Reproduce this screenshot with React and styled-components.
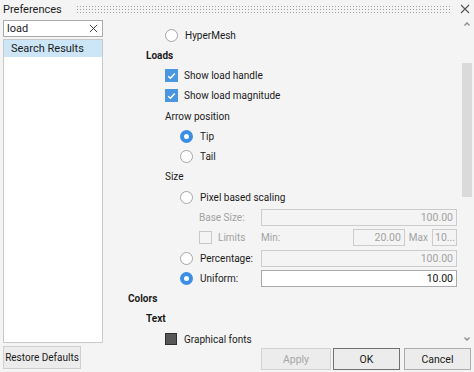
import React from 'react';
import styled, { createGlobalStyle } from 'styled-components';

const GlobalStyle = createGlobalStyle`
  html, body {
    margin: 0;
    padding: 0;
    background: #f4f4f4;
  }
  body {
    font-family: Roboto, 'Liberation Sans', sans-serif;
    font-size: 10px;
    color: #1b1b1b;
  }
`;

const INDENT = [25, 43, 62, 77, 96];
const ROW_H = 20.27;

const Window = styled.div`
  width: 474px;
  height: 372px;
  box-sizing: border-box;
  padding-left: 3px;
  display: grid;
  grid-template-columns: 100px 1fr;
  grid-template-rows: 18px 327px 1fr;
  overflow: hidden;
`;

const TitleBar = styled.div`
  grid-column: 1 / -1;
  display: flex;
  align-items: center;
`;
const Title = styled.div`
  font-size: 11px;
  color: #222;
`;
const Dots = styled.div`
  flex: 1;
  height: 9px;
  margin: 0 8px 0 14px;
  background-image: radial-gradient(#9c9c9c 40%, transparent 45%);
  background-size: 3px 3px;
`;
const CloseBtn = styled.div`
  width: 10px;
  height: 10px;
  margin-right: 4px;
  display: flex;
  svg {
    display: block;
  }
`;

const LeftCol = styled.div`
  display: flex;
  flex-direction: column;
  padding: 2px 0 2px 0;
  gap: 2px;
`;
const Search = styled.div`
  height: 17px;
  box-sizing: border-box;
  border: 1px solid #ababab;
  background: #fff;
  display: flex;
  align-items: center;
  padding: 0 4px 0 3px;
  font-size: 11px;
  span {
    flex: 1;
  }
`;
const List = styled.div`
  flex: 1;
  border: 1px solid #c9c9c9;
  background: #fff;
  padding: 0;
`;
const ListItem = styled.div`
  height: 17px;
  line-height: 17px;
  padding-left: 7px;
  background: ${p => (p.$selected ? '#cce6f7' : 'transparent')};
  font-size: 11px;
`;

const RightCol = styled.div`
  display: flex;
  min-width: 0;
`;
const Content = styled.div`
  flex: 1;
  padding-top: 7px;
`;
const Row = styled.div`
  height: ${ROW_H}px;
  display: flex;
  align-items: center;
  padding-left: ${p => INDENT[p.$level]}px;
  color: ${p => (p.$disabled ? '#a2a2a2' : 'inherit')};
`;
const Heading = styled(Row)`
  font-weight: 700;
`;
const FieldRow = styled.div`
  height: ${ROW_H}px;
  display: grid;
  grid-template-columns: 158px 196px;
  align-items: center;
`;
const FieldLabel = styled.div`
  display: flex;
  align-items: center;
  padding-left: ${p => INDENT[p.$level]}px;
  color: ${p => (p.$disabled ? '#a2a2a2' : 'inherit')};
`;
const Input = styled.div`
  height: 17px;
  box-sizing: border-box;
  width: ${p => (p.$width ? `${p.$width}px` : '100%')};
  border: 1px solid ${p => (p.$disabled ? '#cccccc' : '#a9a9a9')};
  background: ${p => (p.$disabled ? '#f4f4f4' : '#fff')};
  color: ${p => (p.$disabled ? '#a2a2a2' : '#111')};
  text-align: ${p => (p.$left ? 'left' : 'right')};
  padding: 0 3px 0 2px;
  line-height: 15px;
  font-size: 10.5px;
  overflow: hidden;
  white-space: nowrap;
`;
const MinMax = styled.div`
  display: flex;
  align-items: center;
  color: #a2a2a2;
`;
const MinLabel = styled.span`
  flex: 1;
`;
const MaxLabel = styled.span`
  margin: 0 4px;
`;

const Radio = styled.span`
  width: 13px;
  height: 13px;
  box-sizing: border-box;
  border-radius: 50%;
  border: ${p => (p.$checked ? '4px solid #3a8ee6' : '1px solid #a6a6a6')};
  background: #fff;
  margin-right: 7px;
  flex: none;
`;
const Check = styled.span`
  width: 13px;
  height: 13px;
  box-sizing: border-box;
  flex: none;
  margin-right: 6px;
  background: ${p => (p.$checked ? '#4a96e0' : 'transparent')};
  border: 1px solid ${p => (p.$checked ? '#4a96e0' : '#c8c8c8')};
  display: flex;
  align-items: center;
  justify-content: center;
`;
const Swatch = styled.span`
  width: 12px;
  height: 12px;
  box-sizing: border-box;
  flex: none;
  margin-right: 7px;
  background: ${p => p.$color};
  border: 1px solid #2e2e2e;
`;

const ScrollBar = styled.div`
  width: 10px;
  margin-right: 2px;
  display: flex;
  flex-direction: column;
`;
const ScrollArrow = styled.div`
  height: 12px;
  display: flex;
  align-items: center;
  justify-content: center;
`;
const Thumb = styled.div`
  margin-top: 33px;
  height: 134px;
  background: #dadada;
`;
const Spacer = styled.div`
  flex: 1;
`;

const FooterLeft = styled.div`
  padding-top: 1px;
`;
const FooterRight = styled.div`
  display: flex;
  padding: 3px 0 0 158px;
  gap: 2px;
`;
const Button = styled.button`
  font-family: inherit;
  font-size: 10.5px;
  white-space: nowrap;
  height: ${p => (p.$tall ? 23 : 22)}px;
  width: ${p => p.$width}px;
  padding: 0;
  margin-right: ${p => p.$gap || 0}px;
  background: #ececec;
  color: ${p => (p.$disabled ? '#a6a6a6' : '#1b1b1b')};
  border: 1px solid
    ${p => (p.$primary ? '#707070' : p.$disabled ? '#d2d2d2' : '#adadad')};
`;
const SmallButton = styled(Button)`
  font-size: 10px;
  border-color: #cfcfcf;
`;

const Chevron = ({ up }) => (
  <svg width="8" height="6" viewBox="0 0 8 6">
    <polyline
      points={up ? '1.5,4.5 4,2 6.5,4.5' : '1.5,1.5 4,4 6.5,1.5'}
      fill="none"
      stroke="#8a8a8a"
      strokeWidth="1.3"
    />
  </svg>
);

const Tick = () => (
  <svg width="9" height="8" viewBox="0 0 9 8">
    <polyline
      points="1.2,4.2 3.4,6.2 7.8,1.5"
      fill="none"
      stroke="#fff"
      strokeWidth="1.5"
    />
  </svg>
);

const Cross = ({ size, color }) => (
  <svg width={size} height={size} viewBox="0 0 10 10">
    <path d="M1 1 L9 9 M9 1 L1 9" stroke={color} strokeWidth="1.1" />
  </svg>
);

export default function App() {
  return (
    <>
      <GlobalStyle />
      <Window>
        <TitleBar>
          <Title>Preferences</Title>
          <Dots />
          <CloseBtn>
            <Cross size={10} color="#555" />
          </CloseBtn>
        </TitleBar>

        <LeftCol>
          <Search>
            <span>load</span>
            <Cross size={9} color="#444" />
          </Search>
          <List>
            <ListItem $selected>Search Results</ListItem>
          </List>
        </LeftCol>

        <RightCol>
          <Content>
            <Row $level={2}>
              <Radio />
              HyperMesh
            </Row>
            <Heading $level={1}>Loads</Heading>
            <Row $level={2}>
              <Check $checked>
                <Tick />
              </Check>
              Show load handle
            </Row>
            <Row $level={2}>
              <Check $checked>
                <Tick />
              </Check>
              Show load magnitude
            </Row>
            <Row $level={2}>Arrow position</Row>
            <Row $level={3}>
              <Radio $checked />
              Tip
            </Row>
            <Row $level={3}>
              <Radio />
              Tail
            </Row>
            <Row $level={2}>Size</Row>
            <Row $level={3}>
              <Radio />
              Pixel based scaling
            </Row>
            <FieldRow>
              <FieldLabel $level={4} $disabled>
                Base Size:
              </FieldLabel>
              <Input $disabled>100.00</Input>
            </FieldRow>
            <FieldRow>
              <FieldLabel $level={4} $disabled>
                <Check />
                Limits
              </FieldLabel>
              <MinMax>
                <MinLabel>Min:</MinLabel>
                <Input $disabled $width={52}>
                  20.00
                </Input>
                <MaxLabel>Max</MaxLabel>
                <Input $disabled $left $width={25}>
                  10...
                </Input>
              </MinMax>
            </FieldRow>
            <FieldRow>
              <FieldLabel $level={3}>
                <Radio />
                Percentage:
              </FieldLabel>
              <Input $disabled>100.00</Input>
            </FieldRow>
            <FieldRow>
              <FieldLabel $level={3}>
                <Radio $checked />
                Uniform:
              </FieldLabel>
              <Input>10.00</Input>
            </FieldRow>
            <Heading $level={0}>Colors</Heading>
            <Heading $level={1}>Text</Heading>
            <Row $level={2}>
              <Swatch $color="#575757" />
              Graphical fonts
            </Row>
          </Content>
          <ScrollBar>
            <ScrollArrow>
              <Chevron up />
            </ScrollArrow>
            <Thumb />
            <Spacer />
            <ScrollArrow>
              <Chevron />
            </ScrollArrow>
          </ScrollBar>
        </RightCol>

        <FooterLeft>
          <SmallButton $tall $width={78}>
            Restore Defaults
          </SmallButton>
        </FooterLeft>
        <FooterRight>
          <Button $width={70} $disabled>
            Apply
          </Button>
          <Button $width={67} $primary $gap={2}>
            OK
          </Button>
          <Button $width={67}>Cancel</Button>
        </FooterRight>
      </Window>
    </>
  );
}
